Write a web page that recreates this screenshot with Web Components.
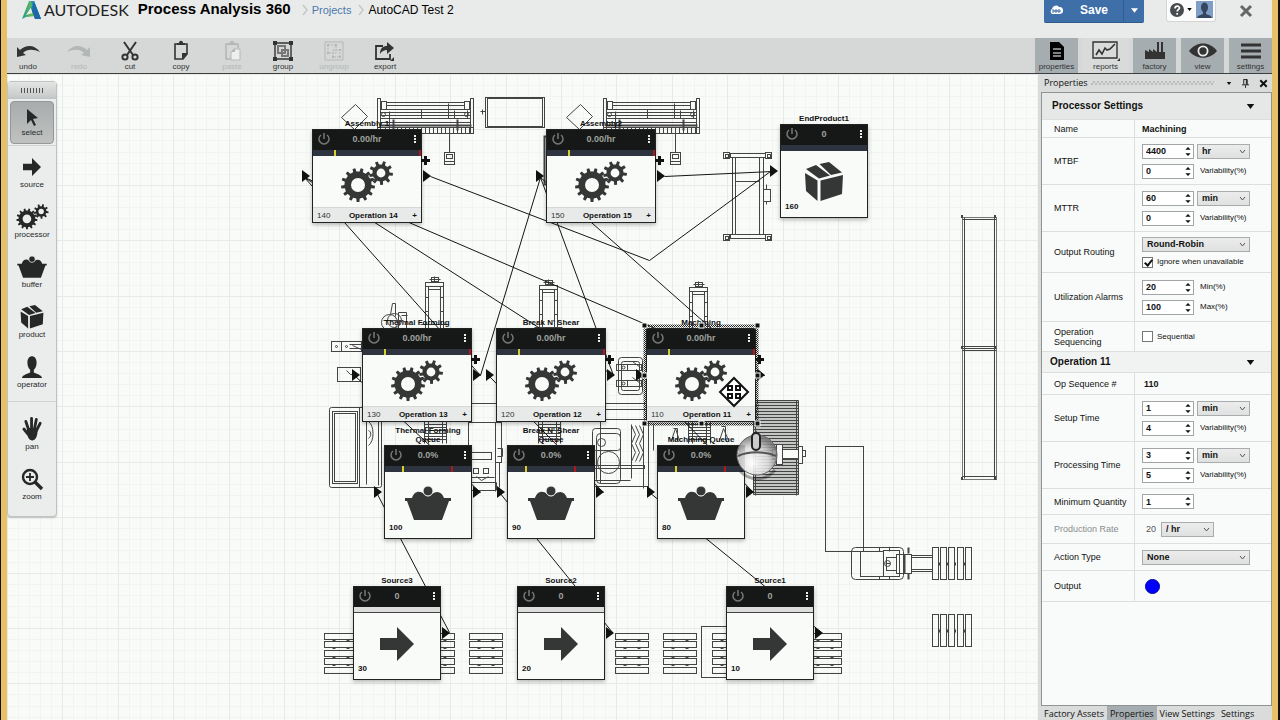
<!DOCTYPE html>
<html lang="en">
<head>
<meta charset="utf-8">
<title>Process Analysis 360</title>
<style>
  html { height: 100%; }
  body { margin: 0; padding: 0 2px 0 1px; min-height: 100vh; box-sizing: border-box; background: #111; color: #111; font: 9px/12px "Liberation Sans", Arial, sans-serif; display: flex; }
</style>
</head>
<body>
<app-shell></app-shell>

<script>
/* Registers an element whose shadow root holds the markup that `render` returns. */
function define(name, render) {
  customElements.define(name, class extends HTMLElement {
    connectedCallback() {
      if (this.shadowRoot) return;
      const t = document.createElement('template');
      t.innerHTML = render(this);
      this.attachShadow({ mode: 'open' }).append(t.content.cloneNode(true));
    }
  });
}
const RESET = `*{box-sizing:border-box} button,input,select{font:inherit;color:inherit;margin:0;border-radius:0} button{background:none;border:0;padding:0;cursor:pointer}`;

/* ---------- icons ---------- */
function gear(cx, cy, teeth, outer, inner, hole) {
  let d = '';
  const step = Math.PI * 2 / teeth;
  for (let i = 0; i < teeth; i++) {
    const a = i * step + 0.12;
    [[-0.26, inner], [-0.17, outer], [0.17, outer], [0.26, inner]].forEach(([f, r], k) => {
      d += (i || k ? 'L' : 'M') + (cx + r * Math.cos(a + f * step)).toFixed(2) + ' ' + (cy + r * Math.sin(a + f * step)).toFixed(2);
    });
  }
  return d + `ZM${cx - hole} ${cy}a${hole} ${hole} 0 1 0 ${hole * 2} 0a${hole} ${hole} 0 1 0 ${-hole * 2} 0Z`;
}
const ICONS = {
  undo: [24, 22, '<path d="M1 7v10l9-2-3-2c4-4 10-4 17-1C18 4 10 5 4 10z" fill="currentColor"/>'],
  redo: [24, 22, '<path d="M23 7v10l-9-2 3-2c-4-4-10-4-17-1C6 4 14 5 20 10z" fill="currentColor"/>'],
  cut: [18, 22, '<g fill="none" stroke="currentColor" stroke-width="2"><path d="M3 2l9 13M15 2L6 15"/><circle cx="4" cy="17" r="2.6"/><circle cx="14" cy="17" r="2.6"/></g>'],
  copy: [18, 22, '<path d="M3 4h12v10l-4 5H3z" fill="none" stroke="currentColor" stroke-width="1.6"/><path d="M5 5V3h2c0-3 4-3 4 0h2v2zM10 19v-6h6z" fill="currentColor"/>'],
  paste: [18, 22, '<path d="M8 19H3V4h12v4" fill="none" stroke="currentColor" stroke-width="1.6"/><path d="M5 5V3h2c0-3 4-3 4 0h2v2z" fill="currentColor"/><path d="M8 20v-8l3-3h6v11z" fill="#eee" stroke="currentColor"/><path d="M8 12l4-4v4z" fill="currentColor"/>'],
  group: [22, 22, '<g fill="none" stroke="currentColor"><path d="M3 3h16v16H3z" stroke-width="1.4"/><path d="M6 6h7v7H6zM10 10h6v6h-6z" stroke="#777" stroke-width="2"/></g><path d="M1 1h4v4H1zM17 1h4v4h-4zM1 17h4v4H1zM17 17h4v4h-4z" fill="currentColor"/>'],
  ungroup: [22, 22, '<g fill="none" stroke="currentColor"><path d="M2 2h18v18H2z"/><path d="M5 5h8v8H5zM10 10h7v7h-7z" stroke-dasharray="2 1"/></g><path d="M4 4h2v2H4zM12 4h2v2h-2zM4 12h2v2H4zM16 9h2v2h-2zM9 16h2v2H9zM16 16h2v2h-2z" fill="currentColor"/>'],
  exporting: [22, 22, '<path d="M9 6H2v13h14v-5" fill="none" stroke="currentColor" stroke-width="1.8"/><path d="M6 14c0-6 3-8 7-8V2l7 6-7 6v-4c-3 0-5 1-7 4zM20 17v4h-4z" fill="currentColor"/>'],
  doc: [16, 20, '<path d="M1 1h9l5 5v13H1z" fill="#000"/><path d="M4 8h8M4 12h8M4 15h8" stroke="#a6adb0" stroke-width="1.4"/>'],
  chart: [28, 22, '<path d="M1 2h24v16H1z" fill="none" stroke="currentColor" stroke-width="1.4"/><path d="M4 15l3-5 3 4 3-6 2 2 3-1 5-5" fill="none" stroke="currentColor" stroke-width="1.6"/><path d="M28 18v3h-3z" fill="currentColor"/>'],
  factory: [22, 22, '<path d="M1 19V10l4 2V9l4 3V9l4 3V2h2v10h2V2h2v10h2v7z" fill="currentColor"/>'],
  eye: [28, 22, '<path d="M0 11C7 1 21 1 28 11 21 20 7 20 0 11z" fill="currentColor"/><circle cx="14" cy="11" r="4.6" fill="none" stroke="#e8eaea" stroke-width="1.8"/>'],
  menu: [20, 20, '<path d="M0 4h20M0 10h20M0 16h20" stroke="currentColor" stroke-width="3"/>'],
  pointer: [14, 18, '<path d="M2 1l11 9-5 1 3 6-2 1-3-6-4 4z" fill="currentColor"/>'],
  arrow: [34, 34, '<path d="M0 11h17V0l17 17-17 17V23H0z" fill="currentColor"/>'],
  gears: [52, 42, `<path fill-rule="evenodd" fill="currentColor" d="${gear(17, 24, 13, 17, 13.6, 7)}${gear(40, 12, 9, 12, 8.6, 4.4)}"/>`],
  basket: [46, 36, '<path d="M0 12h7c2-7 8-8 12-4 3 3 5 3 8 0 5-4 10-2 12 4h7v3h-2l-7 19H9L2 15H0z" fill="currentColor"/><circle cx="23" cy="5" r="5" fill="currentColor" stroke="#f4f6f4"/>'],
  box: [38, 40, '<path d="M0 11l12.500 7.500v20.500L1 29zM15.500 18.500L38 13l-1 19-21.500 7zM1 7l10-4 14 10.500-11 3zM14.500 2L24 0l13 10.500-11 2.500z" fill="currentColor"/>'],
  person: [24, 26, '<path d="M7 8c0-9 10-9 10 0 0 4-1 6-3 8v3c3 2 8 2 9 6H1c1-4 6-4 9-6v-3C8 14 7 12 7 8z" fill="currentColor"/>'],
  hand: [22, 26, '<g stroke="currentColor" stroke-width="3" stroke-linecap="round"><path d="M7 14L4 5M10 13V2M13 13l2-10M15 15l4-8M6 18l-4-5"/></g><path d="M6 12h10c1 6-1 13-5 13S5 20 5 15z" fill="currentColor"/>'],
  zoom: [24, 26, '<g fill="none" stroke="currentColor"><circle cx="10" cy="11" r="7" stroke-width="2.4"/><path d="M10 7v8M6 11h8" stroke-width="1.8"/><path d="M15 16l7 7" stroke-width="3.4"/></g>'],
  power: [14, 14, '<path d="M4 3a5 5 0 1 0 6 0M7 1v6" fill="none" stroke="#777" stroke-width="1.5"/>'],
  dots: [4, 10, '<path d="M1 1h2v2H1zM1 4h2v2H1zM1 7h2v2H1z" fill="#eee"/>'],
  caret: [9, 6, '<path d="M0 0h9L4.5 6z" fill="currentColor"/>'],
  chevron: [7, 4, '<path d="M1 0l2.5 3L6 0" fill="none" stroke="#555"/>'],
  spin: [6, 10, '<path d="M0 3L3 0l3 3zM0 7l3 3 3-3z" fill="#111"/>'],
  crumb: [6, 12, '<path d="M1 1l4 5-4 5" fill="none" stroke="#c3c6c6" stroke-width="1.4"/>'],
  close: [14, 14, '<path d="M2 2l10 10M12 2L2 12" stroke="currentColor" stroke-width="3"/>'],
  pin: [8, 10, '<path d="M2 0v6M5 0v6M2 0.500h4v6M0 6.500h8M4 7v3" fill="none" stroke="currentColor"/>'],
  cloud: [14, 10, '<path d="M3 9a3 3 0 0 1 0-5 4 4 0 0 1 7-2 3 3 0 0 1 1 7z" fill="#fff"/><path d="M3 5h2v2H3M6 5h2v2H6zM9 5h2v2H9z" fill="none" stroke="#3e6ea6"/>'],
  logo: [20, 20, '<defs><linearGradient id="a" x1="0" y1="0" x2="1" y2="1"><stop offset="0" stop-color="#25a5c8"/><stop offset="1" stop-color="#173f86"/></linearGradient><linearGradient id="b" x1="0" y1="0" x2="1" y2="0"><stop offset="0" stop-color="#1d9b8e"/><stop offset="1" stop-color="#8ac53f"/></linearGradient></defs><path d="M7 1h5l7 18h-6l-1-3L8 6z" fill="url(#a)"/><path d="M7 1h2l1 5-6 9 7-2 3 3-10 1-4 2z" fill="url(#b)"/><path d="M12 1l7 18h-6l-3-8z" fill="#1c69a8"/>'],
  help: [14, 14, '<circle cx="7" cy="7" r="7" fill="#484b4d"/><path d="M5 5.500c0-3 4.500-3 4.500-.5 0 1.500-2.300 1.600-2.300 3.500M7.200 10v1.800" fill="none" stroke="#fff" stroke-width="1.700"/>'],
  user: [17, 17, '<path d="M0 0h17v17H0z" fill="#7f9dc6"/><path d="M5 6c0-6 7-6 7 0 0 3-1 4-2 5v2c2 1 5 1 6 4H1c1-3 4-3 6-4v-2C6 10 5 9 5 6z" fill="#35475e"/>'],
};
define('ui-icon', el => {
  const [w, h, body] = ICONS[el.getAttribute('name')];
  const W = el.getAttribute('w') || w, H = el.getAttribute('h') || h;
  return `<style>:host{display:inline-flex;flex:none}svg{display:block;overflow:visible}</style>
  <svg width="${W}" height="${H}" viewBox="0 0 ${w} ${h}" aria-hidden="true">${body}</svg>`;
});

/* ---------- header ---------- */
define('app-header', () => `<style>${RESET}
  :host{display:flex;align-items:flex-start;background:#e9ebea;height:38px;padding-left:15px;color:#000}
  .left,.right{display:flex;align-items:center;height:20px}
  .left{flex:1;white-space:nowrap}
  .brand{font:16px/20px Lato,sans-serif;margin:0 9px 0 2px;color:#222}
  h1{font-size:15px;line-height:18px;margin:0 11px 2px 0}
  a{color:#4a78b0;text-decoration:none;font-size:11px;margin:0 7px 0 4px}
  .doc{font-size:12px;margin-left:4px}
  .right{align-items:flex-start}
  .save{display:flex;align-items:center;height:23px;background:#3f6fa8;color:#fff;border-radius:0 0 2px 2px;border-bottom:1px solid #2f5a8c}
  .save button{display:flex;align-items:center;height:22px;padding-bottom:2px;font-weight:bold;font-size:12px}
  .main{width:79px;gap:17px;padding-left:5px}
  .more{width:21px;justify-content:center;border-left:1px solid #315d92}
  .me{display:flex;align-items:center;gap:4px;height:22px;margin-left:22px;background:#fbfbfb;border:1px solid #d4d6d6;border-top:0;border-radius:0 0 3px 3px;padding:0 2px 2px 3px}
  .me button{display:flex;align-items:center;gap:3px}
  .x{margin:4px 19px 0 23px;color:#666;display:flex}
</style>
<div class="left"><ui-icon name="logo"></ui-icon><span class="brand">AUTODESK</span><h1>Process Analysis 360</h1>
<ui-icon name="crumb"></ui-icon><a href="#projects">Projects</a><ui-icon name="crumb"></ui-icon><span class="doc">AutoCAD Test 2</span></div>
<div class="right"><div class="save"><button class="main"><ui-icon name="cloud"></ui-icon>Save</button><button class="more" aria-label="Save options"><ui-icon name="caret" w="7" h="5"></ui-icon></button></div>
<div class="me"><button aria-label="Help"><ui-icon name="help"></ui-icon><ui-icon name="caret" w="5" h="3"></ui-icon></button><button aria-label="Account"><ui-icon name="user"></ui-icon></button></div>
<button class="x" aria-label="Close"><ui-icon name="close"></ui-icon></button></div>`);

/* ---------- toolbar ---------- */
define('tool-button', el => `<style>${RESET}
  :host{display:block;width:42px;color:#333}
  :host([off]){color:#b4b7b7}
  :host([panel]){width:43px;background:#a6adb0}
  :host([wide]){width:47px;background:#d9dbdb;margin:0 -1px}
  button{display:flex;flex-direction:column;align-items:center;width:100%;height:35px;padding-top:2px;font-size:8px;line-height:9px}
  .i{display:flex;align-items:center;height:22px}
</style><button${el.hasAttribute('off') ? ' disabled' : ''}><span class="i"><ui-icon name="${el.getAttribute('icon')}"></ui-icon></span><slot></slot></button>`);
define('app-toolbar', () => `<style>
  :host{display:flex;justify-content:space-between;background:#d5d8d7;border-bottom:1px solid #3c3f40}
  div{display:flex}.l{gap:9px}.r{gap:5px}
</style><div class="l">
<tool-button icon="undo">undo</tool-button><tool-button icon="redo" off>redo</tool-button><tool-button icon="cut">cut</tool-button><tool-button icon="copy">copy</tool-button><tool-button icon="paste" off>paste</tool-button><tool-button icon="group">group</tool-button><tool-button icon="ungroup" off>ungroup</tool-button><tool-button icon="exporting">export</tool-button></div>
<div class="r"><tool-button icon="doc" panel>properties</tool-button><tool-button icon="chart" wide>reports</tool-button><tool-button icon="factory" panel>factory</tool-button><tool-button icon="eye" panel>view</tool-button><tool-button icon="menu" panel>settings</tool-button></div>`);

/* ---------- palette ---------- */
define('palette-item', el => `<style>${RESET}
  :host{display:block;color:#262828}
  button{display:flex;flex-direction:column;align-items:center;width:100%;height:50px;padding-top:8px;font-size:8px;line-height:9px}
  .i{display:flex;align-items:center;justify-content:center;height:26px}
  :host([active]) button{height:43px;padding-top:4px;background:linear-gradient(#a9acac,#bfc2c1);border:1px solid #949797;border-radius:4px}
  :host([active]) .i{height:22px}
</style><button><span class="i"><ui-icon name="${el.getAttribute('icon')}" w="${el.getAttribute('w')}" h="${el.getAttribute('h')}"></ui-icon></span><slot></slot></button>`);
define('tool-palette', () => `<style>
  :host{display:block;box-sizing:border-box;width:50px;background:#ebeded;border:1px solid #bfc2c2;border-radius:4px;box-shadow:0 1px 2px #0003}
  .grip{height:16px;background:linear-gradient(#e3e5e4,#c6c9c8);border-bottom:1px solid #c0c3c3;display:flex;align-items:center;justify-content:center}
  .grip i{width:23px;height:5px;background:repeating-linear-gradient(90deg,#555 0 1px,transparent 1px 3px)}
  div+div{border-bottom:1px solid #cfd2d2}.s{padding:2px 2px 1px}.g{padding-bottom:5px}
  div.h{padding:6px 0 8px;border:0}
</style><div class="grip"><i></i></div>
<div class="s"><palette-item icon="pointer" w="14" h="18" active>select</palette-item></div>
<div class="g"><palette-item icon="arrow" w="20" h="18">source</palette-item><palette-item icon="gears" w="33" h="26">processor</palette-item><palette-item icon="basket" w="30" h="23">buffer</palette-item><palette-item icon="box" w="24" h="24">product</palette-item><palette-item icon="person" w="22" h="24">operator</palette-item></div>
<div class="h"><palette-item icon="hand" w="21" h="26">pan</palette-item><palette-item icon="zoom" w="24" h="26">zoom</palette-item></div>`);

/* ---------- flow nodes ---------- */
const PICTURE = { op: 'gears', queue: 'basket', source: 'arrow', end: 'box' };
define('flow-node', el => {
  const k = el.getAttribute('kind'), g = n => el.getAttribute(n) || '';
  return `<style>${RESET}
  :host{position:absolute;width:88px;height:94px;font-weight:bold;font-size:8px;line-height:9px;color:#111}
  :host([kind=op]){width:110px}
  .card{height:100%;display:flex;flex-direction:column;background:#f9fbf9;border:1px solid #222;box-shadow:0 2px 4px #0004}
  .name{position:absolute;left:0;right:0;bottom:calc(100% + 1px);text-align:center}
  header{display:flex;align-items:center;justify-content:space-between;height:20px;padding:0 4px 2px;background:#161817;color:#9fa29f;font-size:9px;flex:none}
  header button{display:flex;width:14px}header button:last-child{justify-content:flex-end}
  .bar{height:6px;background:#2d3440;flex:none;display:flex;padding-left:21px;justify-content:space-between}
  .bar i{width:2px;background:#d8cf2c}.bar i+i{background:#b0181c}
  :host([kind=queue]) .bar{padding:0 18px 0 17px}
  :host([kind=end]) .bar i{display:none}
  :host([kind=source]) .bar{background:#dcdddc;border-bottom:1px solid #444}:host([kind=source]) .bar i{display:none}
  .pic{flex:1;display:flex;align-items:center;justify-content:center;color:#353736}
  :host([kind=queue]) .pic{padding-top:12px}
  :host([kind=end]) .pic,:host([kind=source]) .pic{padding-top:11px}
  footer{display:flex;align-items:center;justify-content:space-between;height:15px;padding:0 4px;flex:none}
  :host([kind=op]) footer{background:#e8eae9;border-top:1px solid #d6d8d7}
  :host([kind=op]) footer span:first-child{color:#333;font-weight:normal}
  .op{flex:1;text-align:center;padding-left:4px}
  :host(:not([kind=op])) footer{padding-bottom:6px}
  .pin,.pout,.plus{position:absolute;top:41px;width:8px;height:12px;background:#111}
  .pin,.pout{clip-path:polygon(0 0,100% 50%,0 100%)}
  .pin{left:-10px}.pout{left:calc(100% + 1px)}
  .plus{top:27px;left:calc(100% - 1px);width:9px;height:9px;clip-path:polygon(33% 0,67% 0,67% 33%,100% 33%,100% 67%,67% 67%,67% 100%,33% 100%,33% 67%,0 67%,0 33%,33% 33%)}
  </style>
  <div class="name">${g('name')}</div>
  ${k !== 'source' ? '<div class="pin"></div>' : ''}${k !== 'end' ? '<div class="pout"></div>' : ''}${k === 'op' ? '<div class="plus"></div>' : ''}
  <article class="card"><header><button aria-label="Power"><ui-icon name="power"></ui-icon></button><span>${g('value')}</span><button aria-label="Menu"><ui-icon name="dots"></ui-icon></button></header>
  <div class="bar"><i></i><i></i></div><div class="pic"><ui-icon name="${PICTURE[k]}"></ui-icon></div>
  <footer><span>${g('seq')}</span>${k === 'op' ? `<span class="op">${g('op')}</span><span>+</span>` : ''}</footer></article>`;
});

/* ---------- plant drawing ---------- */
const R = (x, y, w, h, r = 0) => `<rect x="${x}" y="${y}" width="${w}" height="${h}" rx="${r}"/>`;
const P = d => `<path d="${d}"/>`;
const at = (x, y, s) => `<g transform="translate(${x} ${y})">${s}</g>`;
const palletH = [0, 8, 17, 25, 34].map(y => R(0, y, 33, 6)).join('') + P('M8 7h3M22 7h3M8 15h3M22 15h3M8 24h3M22 24h3M8 32h3M22 32h3');
const palletV = [0, 8, 16, 25, 33].map(x => R(x, 0, 6, 32)).join('') + P('M7 15v3M15 15v3M23 15v3M32 15v3');
const press = R(0, 2, 3, 35) + R(93, 2, 3, 35) + R(4, 5, 5, 8) + R(87, 5, 5, 8) + R(9, 6, 78, 3) + R(3, 13, 90, 3)
  + P('M9 9h78M3 19h90M3 22h90M3 26h90M12 15v17M44 13v9M71 7v15M77 14v8M34 22h14M90 14v8M0 31h96M0 37h96')
  + P(Array.from({ length: 22 }, (_, i) => `M${8 + i * 4} 31v6`).join('')) + '<circle cx="6" cy="18" r="2"/><circle cx="89" cy="18" r="2"/><path stroke-width="2" d="M80 23v11M16 23v11M2 29h92"/>'
  + P('M72 37v19') + R(67, 56, 10, 9) + R(69, 58, 6, 4) + R(67, 65, 10, 3);
const conveyor = R(0, 5, 18, 4) + R(0, 9, 3, 43) + R(15, 9, 3, 43) + R(6, 0, 7, 4) + P('M9 -1v6M4 2h11M0 20h3M0 34h3M15 20h3M15 34h3M-5 47h28M3 12h12');
const rungs = P(Array.from({ length: 7 }, (_, i) => `M0 ${i * 3}h22`).join('') + 'M0 0v22M22 0v22M4 0v22M18 0v22');
const plant = at(377, 96, press) + at(603, 96, press)
  + P('M355 104l12 12-13 13-13-12zM580 104l12 12-13 13-13-12z')
  + R(485, 97, 59, 30) + R(487, 98, 55, 28) + P('M480 111h5M482 109v5') + '<path stroke-width="2" d="M547 136h-3v48h3"/>'
  + R(730, 153, 35, 4) + R(730, 234, 35, 4) + R(732, 157, 3, 77) + R(759, 157, 4, 77) + R(735, 181, 24, 53) + R(763, 189, 7, 12) + P('M766 184v5M766 201v3')
  + [[723, 152], [765, 152], [723, 234], [765, 234]].map(([x, y]) => R(x, y, 6, 6) + R(x + 2, y + 2, 3, 3)).join('')
  + at(425, 277, conveyor) + at(539, 280, conveyor) + at(689, 282, conveyor)
  + '<g transform="translate(380 302)"><circle cx="9" cy="20" r="8"/><circle cx="14" cy="18" r="7"/><path d="M10 12l2-11h3v13M18 10h8v18M18 10v16M21 13h6M3 18h20"/></g>'
  + R(331, 341, 30, 10) + P('M341 341v10M349 344h12M349 348h12M352 345l9 4') + '<circle cx="336" cy="346" r="1"/><circle cx="346" cy="346" r="1"/>'
  + R(337, 367, 23, 14) + P('M346 370l4 4h8')
  + R(329, 407, 52, 80, 2) + R(332, 411, 25, 72) + R(334, 413, 21, 68) + P('M359 407v80M366 410v74M378 407v78M368 421c6 4 6 20 0 24M368 430c3 1 3 6 0 8')
  + at(424, 421, rungs) + at(538, 421, rungs) + at(688, 421, rungs)
  + R(468, 422, 27, 68) + R(495, 422, 6, 40) + R(471, 452, 20, 7) + R(473, 468, 5, 5) + R(483, 468, 5, 5) + P('M468 403h28M468 477h26M470 482h26v8M495 463v28M499 462v25M476 476l5 4 7-4M497 448h5v8h-5')
  + P('M600 403h49M600 419h48M600 403v80M600 409h48M643 425v63M648 402v86M590 486h58M590 480h40M631 424v54')
  + R(592, 428, 28, 22, 3) + R(596, 433, 24, 50, 4) + '<circle cx="601" cy="442" r="4"/><circle cx="608" cy="462" r="11"/>' + R(594, 465, 50, 3)
  + P('M631 425l4 9-4 9 4 9-4 9M635 425l4 9-4 9 4 9-4 9M639 425l4 9-4 9 4 9-4 9')
  + R(618, 357, 24, 37, 3) + R(621, 361, 18, 29, 2) + R(616, 364, 25, 6) + R(616, 380, 25, 6) + '<circle cx="623" cy="367" r="1.500"/><circle cx="623" cy="383" r="1.500"/>' + P('M627 364v6M632 361l8 6M627 380v6M632 377l8 6')
  + P('M671 440l4-12 4 12M673 428h4v12M719 440l4-12 5 12M721 426h4v14M653 424v26')
  + '<path fill="#c4c6c4" d="M753 400h45v94h-45z"/>' + P(Array.from({ length: 31 }, (_, i) => `M753 ${402 + i * 3}h45`).join(''))
  + '<path d="M755 400v95M796 400v95"/><g fill="#f9fbf9">' + R(772, 449, 30, 9) + R(776, 444, 6, 20) + R(798, 446, 4, 17) + R(802, 450, 3, 6) + '</g>'
  + '<g stroke="#777">' + R(962, 217, 34, 262) + '</g>' + P('M964 217v261M994 217v261M962 219h34M962 346h34M962 348h34M962 350h34M962 476h34')
  + '<g fill="#222">' + [[961, 215], [994, 215], [961, 346], [994, 346], [961, 477], [994, 477]].map(([x, y]) => R(x, y, 1, 2)).join('') + '</g>'
  + R(825, 446, 38, 105) + R(851, 547, 52, 32, 4) + R(860, 551, 23, 25) + R(883, 550, 16, 26) + R(886, 557, 10, 13) + '<circle cx="887" cy="563" r="3"/><path stroke-width="2" d="M908 547v6M908 573v6M904 554v19"/>' + R(896, 554, 15, 19) + P('M911 555h21M911 557h21M911 569h21M911 571h21M885 563h5M879 547v4M889 547v4M879 576v3M889 576v3')
  + at(932, 547, palletV) + at(932, 614, palletV)
  + [324, 421, 469, 615, 663, 712, 808].map(x => at(x, 633, palletH)).join('') + R(701, 626, 60, 51);

const outs = { t: [480, 375], b: [613, 375], m: [764, 375] };
const links = [
  ...Object.values(outs).flatMap(([x, y]) => [`M${x} ${y}L304 177`, `M${x} ${y}L540 177`]),
  'M430 176L649 260L770 171', 'M664 176L772 171', 'M480 492L354 375', 'M603 492L488 375', 'M753 492L639 375',
  'M449 632L376 492', 'M612 632L499 492', 'M821 632L649 492',
].join('');
const ticks = [0, 55, 111, 166, 222];
const minor = Array.from({ length: 25 }, (_, i) => Math.round(i * 277 / 25)).map(v => `M${v} 0v277M0 ${v}h277`).join('');

define('flow-canvas', () => `<style>
  :host{display:block;position:relative;flex:1;min-width:0;overflow:hidden;background:#f9fbf9}
  .draw{position:absolute;inset:0;width:100%;height:100%}
  tool-palette{position:absolute;left:0;top:7px}
  .over{pointer-events:none}
</style>
<svg class="draw" aria-hidden="true"><defs><pattern id="grid" width="277" height="277" patternUnits="userSpaceOnUse"><path d="${minor}" stroke="#f1f4f1" fill="none" transform="translate(.5 .5)"/><path d="${ticks.map(v => `M${v} 0v277M0 ${v}h277`).join('')}" stroke="#e7eae7" fill="none" transform="translate(.5 .5)"/></pattern></defs>
<rect width="100%" height="100%" fill="url(#grid)"/>
<g transform="translate(-6.500 -73.500)" fill="none" stroke="#444" stroke-width="1">${plant}<path d="${links}" stroke="#151515"/></g></svg>
${[
  ['op', 312, 129, 'Assembly 1', '0.00/hr', 140, 'Operation 14'], ['op', 546, 129, 'Assembly2', '0.00/hr', 150, 'Operation 15'],
  ['end', 780, 124, 'EndProduct1', '0', 160],
  ['op', 362, 328, 'Thermal Forming', '0.00/hr', 130, 'Operation 13'], ['op', 496, 328, "Break N' Shear", '0.00/hr', 120, 'Operation 12'], ['op', 646, 328, 'Machining', '0.00/hr', 110, 'Operation 11'],
  ['queue', 384, 445, 'Thermal Forming<br>Queue', '0.0%', 100], ['queue', 507, 445, "Break N' Shear<br>Queue", '0.0%', 90], ['queue', 657, 445, 'Machining Queue', '0.0%', 80],
  ['source', 353, 586, 'Source3', '0', 30], ['source', 517, 586, 'Source2', '0', 20], ['source', 726, 586, 'Source1', '0', 10],
].map(([k, x, y, n, v, s, o = '']) => `<flow-node kind="${k}" name="${n}" value="${v}" seq="${s}" op="${o}" style="left:${x - 7}px;top:${y - 74}px"></flow-node>`).join('')}
<svg class="draw over" aria-hidden="true"><defs><pattern id="hatch" width="2" height="2" patternUnits="userSpaceOnUse"><path d="M0 0h1v1H0zM1 1h1v1H1z" fill="#222"/></pattern>
<radialGradient id="ball" cx=".4" cy=".7" r=".65"><stop offset="0" stop-color="#fff" stop-opacity=".95"/><stop offset=".6" stop-color="#ddd" stop-opacity=".85"/><stop offset="1" stop-color="#777" stop-opacity=".85"/></radialGradient></defs>
<g transform="translate(-7 -74)"><rect x="645" y="326" width="112" height="98" fill="none" stroke="url(#hatch)" stroke-width="3"/>
<g fill="#111" stroke="#f9fbf9">${[[642, 323], [699, 323], [755, 323], [642, 373], [755, 373], [642, 421], [699, 421], [755, 421]].map(([x, y]) => R(x, y, 5, 5)).join('')}</g>
<path d="M734 378l14 14-14 14-14-14z" fill="#fff" stroke="#111" stroke-width="2"/><g fill="#fff" stroke="#111" stroke-width="2">${R(728, 386, 4, 4)}${R(736, 386, 4, 4)}${R(728, 394, 4, 4)}${R(736, 394, 4, 4)}</g>
<circle cx="757" cy="455" r="20" fill="url(#ball)" stroke="#666"/><path d="M740 471c10 11 26 10 35-1" fill="none" stroke="#0005" stroke-width="3"/>
<path d="M738 456c10-5 28-5 38 0M756 431v4" fill="none" stroke="#555" stroke-width="2"/><rect x="752" y="433" width="8" height="17" rx="4" fill="#ccc" stroke="#222" stroke-width="2"/></g></svg>
<tool-palette></tool-palette>`);

/* ---------- properties panel ---------- */
define('num-field', el => `<style>${RESET}
  :host{display:inline-flex;position:relative;width:52px;height:15px}
  input{width:100%;height:15px;border:1px solid #a2a5a5;background:#fff;padding:0 14px 0 3px;font-weight:bold;font-size:9px;appearance:textfield;outline:0}
  input::-webkit-inner-spin-button{appearance:none}
  ui-icon{position:absolute;right:3px;top:3px;pointer-events:none}
</style><input type="number" value="${el.getAttribute('value')}" aria-label="${el.getAttribute('label')}"><ui-icon name="spin" w="6" h="9"></ui-icon>`);
define('pick-field', el => `<style>${RESET}
  :host{display:inline-flex;position:relative;width:53px;height:15px}
  :host([full]){width:108px}
  select{appearance:none;width:100%;height:15px;border:1px solid #a9acac;background:linear-gradient(#ececec,#dfe1e0);padding:0 12px 0 4px;font-weight:bold;font-size:9px;line-height:13px;outline:0}
  ui-icon{position:absolute;right:4px;top:6px;pointer-events:none}
</style><select aria-label="${el.getAttribute('label')}"><option>${el.getAttribute('value')}</option></select><ui-icon name="chevron"></ui-icon>`);
define('check-field', el => `<style>${RESET}
  label{display:flex;align-items:center;gap:4px;font-size:8px;line-height:10px;white-space:nowrap}
  input{appearance:none;width:11px;height:11px;border:1px solid #777;background:#fff;position:relative}
  input:checked::after{content:"";position:absolute;left:3px;top:0;width:3px;height:6px;border:solid #111;border-width:0 2px 2px 0;transform:rotate(40deg)}
</style><label><input type="checkbox"${el.hasAttribute('checked') ? ' checked' : ''}><slot></slot></label>`);
define('prop-row', el => `<style>
  :host{display:grid;grid-template-columns:93px 1fr;border-bottom:1px solid #dcdfde;box-sizing:border-box;font-size:9px;line-height:10px}
  .k{display:flex;align-items:center;padding-left:12px;border-right:1px solid #dcdfde}
  :host([dim]) .k{color:#8a8d8d}
  .v{display:flex;flex-direction:column;justify-content:center;gap:5px;padding-left:7px}
</style><div class="k">${el.getAttribute('label')}</div><div class="v"><slot></slot></div>`);
define('prop-section', el => `<style>
  :host{display:block}
  h2{display:flex;align-items:center;justify-content:space-between;margin:0;font-size:10px;line-height:12px;height:27px;padding:0 16px 0 10px;background:#e6e8e7;border-bottom:1px solid #dcdfde;box-sizing:border-box}
  :host([small]) h2{height:21px;background:#f1f3f2;padding-left:8px}
</style><h2>${el.getAttribute('title-text')}<ui-icon name="caret" w="9" h="5"></ui-icon></h2><slot></slot>`);
const timeRows = (name, a, unit, b) => `<div class="f"><num-field value="${a}" label="${name}"></num-field><pick-field value="${unit}" label="${name} unit"></pick-field></div><div class="f"><num-field value="${b}" label="${name} variability"></num-field><span class="u">Variability(%)</span></div>`;
define('properties-panel', () => `<style>${RESET}
  :host{display:flex;flex-direction:column;width:234px;flex:none;background:#d9dcdb;box-sizing:border-box;padding-left:3px}
  .bar{display:flex;align-items:center;gap:10px;height:18px;padding:0 4px 0 3px;font:9px/12px "Open Sans",sans-serif}
  .bar i{flex:1;height:4px;margin:0 2px 0 -7px;background:repeating-conic-gradient(#b9bcbc 0 25%,transparent 0 50%) 0 0/4px 4px}
  .bar button{display:flex}
  .body{flex:1;background:#f9fbfa;border:1px solid #8f9393}
  .f{display:flex;align-items:center;gap:3px;height:15px}.u{font-size:8px;margin-left:3px}
  .r18{height:18px}.r22{height:22px}.r26{height:26px}.r27{height:27px}.r29{height:29px}.r30{height:30px}.r31{height:31px}.r41{height:41px}.r47{height:47px}.r49{height:49px}
  b{padding-left:2px}.name{padding:0}.dot{width:15px;height:15px;border-radius:50%;background:#00f;border:1px solid #0000a0;margin-left:3px}
  .rate{padding:0 2px 0 4px;color:#555}
  nav{display:flex;height:14px;font:9px/13px "Open Sans",sans-serif}
  nav button{padding:0 3px;white-space:nowrap}nav .on{background:#a5adb0}
</style>
<div class="bar"><span>Properties</span><i></i><button aria-label="Panel menu"><ui-icon name="caret" w="6" h="3"></ui-icon></button><button aria-label="Pin"><ui-icon name="pin" w="7" h="9"></ui-icon></button><button aria-label="Close panel"><ui-icon name="close" w="9" h="9"></ui-icon></button></div>
<div class="body"><prop-section title-text="Processor Settings">
<prop-row class="r18" label="Name"><b class="name">Machining</b></prop-row>
<prop-row class="r47" label="MTBF">${timeRows('MTBF', 4400, 'hr', 0)}</prop-row>
<prop-row class="r47" label="MTTR">${timeRows('MTTR', 60, 'min', 0)}</prop-row>
<prop-row class="r41" label="Output Routing"><pick-field full value="Round-Robin" label="Output Routing"></pick-field><check-field checked>Ignore when unavailable</check-field></prop-row>
<prop-row class="r49" label="Utilization Alarms"><div class="f"><num-field value="20" label="Minimum alarm"></num-field><span class="u">Min(%)</span></div><div class="f"><num-field value="100" label="Maximum alarm"></num-field><span class="u">Max(%)</span></div></prop-row>
<prop-row class="r30" label="Operation<br>Sequencing"><check-field>Sequential</check-field></prop-row></prop-section>
<prop-section small title-text="Operation 11">
<prop-row class="r22" label="Op Sequence #"><b>110</b></prop-row>
<prop-row class="r47" label="Setup Time">${timeRows('Setup Time', 1, 'min', 4)}</prop-row>
<prop-row class="r47" label="Processing Time">${timeRows('Processing Time', 3, 'min', 5)}</prop-row>
<prop-row class="r26" label="Minimum Quantity"><num-field value="1" label="Minimum Quantity"></num-field></prop-row>
<prop-row class="r29" dim label="Production Rate"><div class="f"><span class="rate">20</span><pick-field value="/ hr" label="Production Rate unit"></pick-field></div></prop-row>
<prop-row class="r27" label="Action Type"><pick-field full value="None" label="Action Type"></pick-field></prop-row>
<prop-row class="r31" label="Output"><div class="dot"></div></prop-row></prop-section></div>
<nav><button>Factory Assets</button><button class="on">Properties</button><button>View Settings</button><button>Settings</button></nav>`);

define('app-shell', () => `<style>
  :host{display:flex;flex-direction:column;flex:1;min-width:0;box-sizing:border-box;border:solid #e6c168;border-width:0 6px}
  main{flex:1;display:flex;min-height:0}
</style><app-header></app-header><app-toolbar></app-toolbar><main><flow-canvas></flow-canvas><properties-panel></properties-panel></main>`);
</script>
</body>
</html>
